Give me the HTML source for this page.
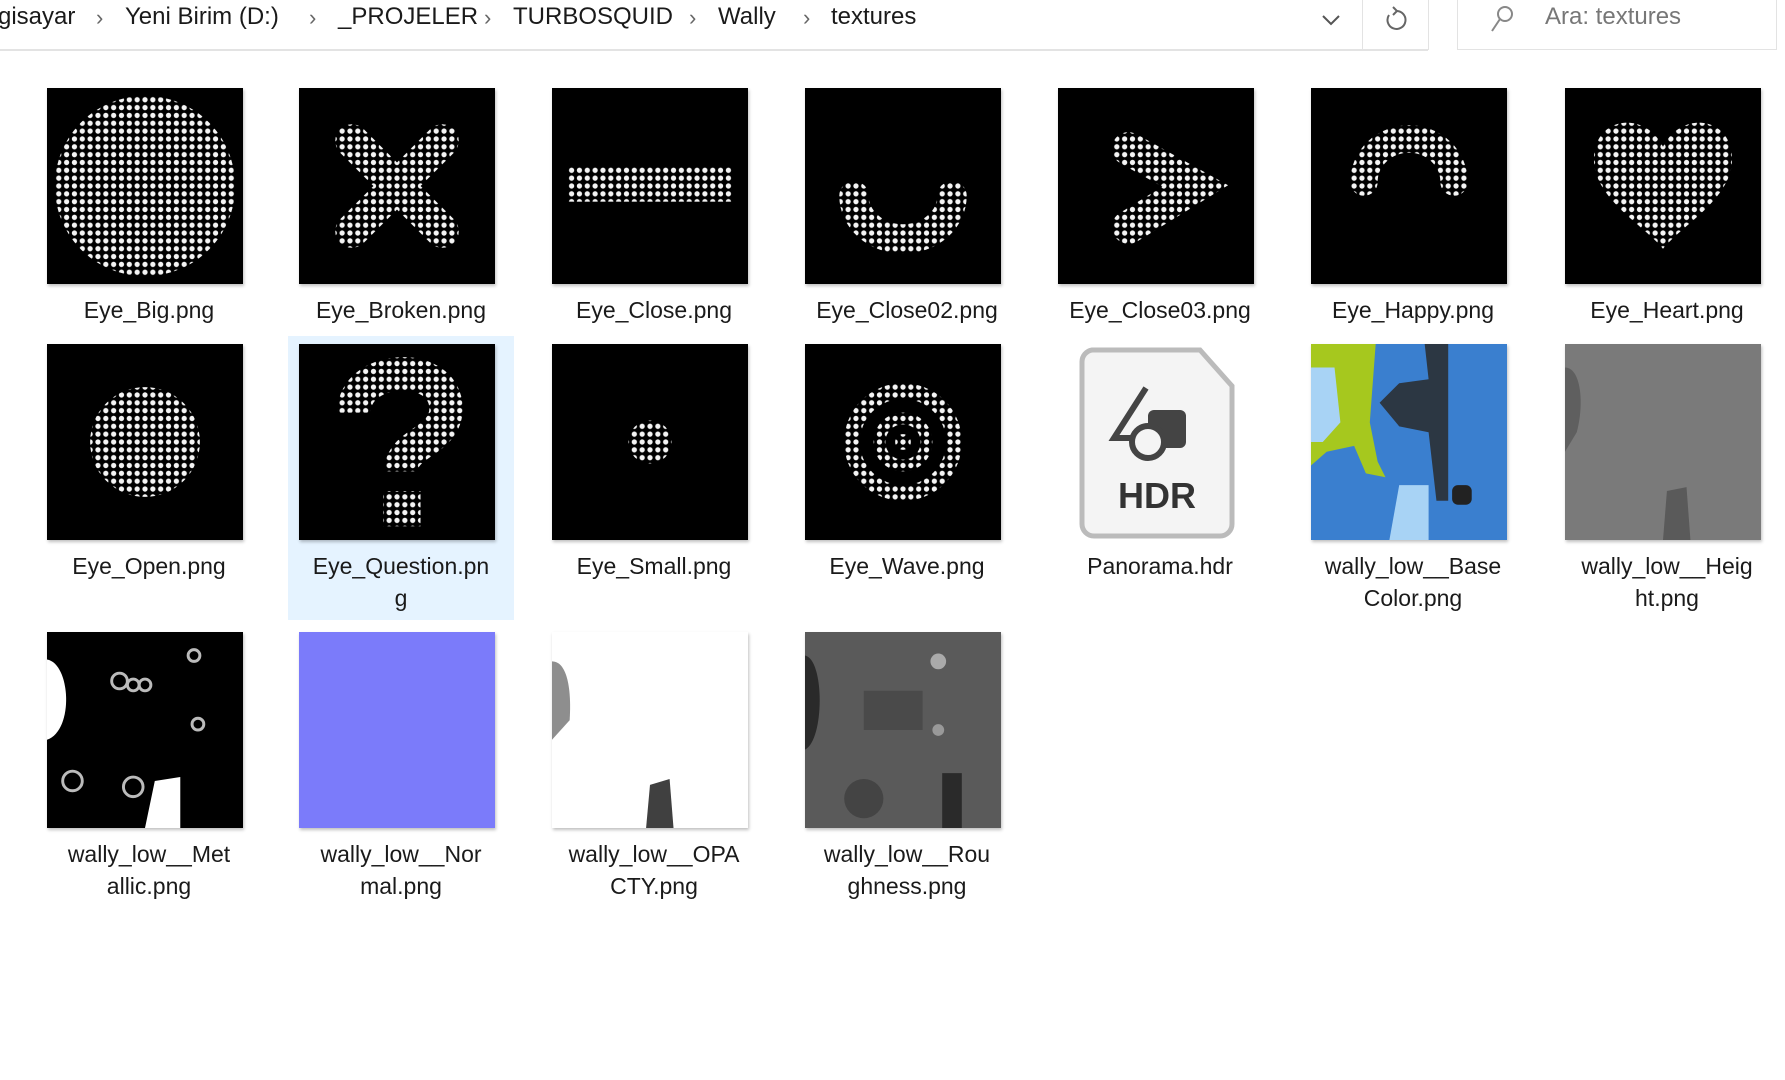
<!DOCTYPE html><html><head><meta charset="utf-8"><style>
body{margin:0;width:1785px;height:1080px;background:#fff;overflow:hidden;font-family:"Liberation Sans",sans-serif;position:relative}
.a{position:absolute}
.bc{top:3px;font-size:24px;color:#1a1a1a;white-space:nowrap}
.ch{top:5px;font-size:22px;color:#666}
.t{position:absolute;width:196px;height:196px;box-shadow:1px 2px 3px rgba(0,0,0,.25)}
.l{position:absolute;width:250px;text-align:center;font-size:23px;line-height:32px;color:#1a1a1a}
svg.t{display:block}
</style></head><body>
<div class="a" style="left:0;top:49px;width:1428px;height:2px;background:#e3e3e3"></div>
<div class="a" style="left:1362px;top:0;width:1px;height:50px;background:#e3e3e3"></div>
<div class="a" style="left:1428px;top:0;width:1px;height:50px;background:#e3e3e3"></div>
<div class="a" style="left:1457px;top:0;width:318px;height:49px;border:1px solid #e3e3e3;border-top:none"></div>
<div class="a bc" style="left:-2px">gisayar</div>
<div class="a ch" style="left:96px">›</div>
<div class="a bc" style="left:125px">Yeni Birim (D:)</div>
<div class="a ch" style="left:309px">›</div>
<div class="a bc" style="left:338px">_PROJELER</div>
<div class="a ch" style="left:484px">›</div>
<div class="a bc" style="left:513px">TURBOSQUID</div>
<div class="a ch" style="left:689px">›</div>
<div class="a bc" style="left:718px">Wally</div>
<div class="a ch" style="left:803px">›</div>
<div class="a bc" style="left:831px">textures</div>
<svg class="a" style="left:1320px;top:12px" width="22" height="16"><path d="M3 4 L11 12 L19 4" stroke="#555" stroke-width="2" fill="none"/></svg>
<svg class="a" style="left:1383px;top:6px" width="26" height="28"><path d="M13 5 A9 9 0 1 1 6 9" stroke="#666" stroke-width="2" fill="none"/><path d="M10 1 L14 5 L10 9" stroke="#666" stroke-width="2" fill="none"/></svg>
<svg class="a" style="left:1488px;top:4px" width="28" height="30"><circle cx="17" cy="10" r="7" stroke="#888" stroke-width="2" fill="none"/><path d="M12 15 L4 27" stroke="#888" stroke-width="2"/></svg>
<div class="a" style="left:1545px;top:3px;font-size:24px;color:#777">Ara: textures</div>

<div class="a" style="left:288px;top:336px;width:226px;height:284px;background:#e5f3ff"></div>

<svg width="0" height="0" style="position:absolute"><defs>
<pattern id="d" width="4" height="4" patternUnits="userSpaceOnUse"><circle cx="2" cy="2" r="1.35" fill="#f4f4f4"/></pattern></defs></svg>

<!-- row 1 -->
<svg class="t" style="left:47px;top:88px" viewBox="0 0 100 100"><rect width="100" height="100"/><circle cx="50" cy="50" r="46" fill="url(#d)"/></svg>
<svg class="t" style="left:299px;top:88px" viewBox="0 0 100 100"><rect width="100" height="100"/><path d="M27 27 L73 73 M73 27 L27 73" stroke="url(#d)" stroke-width="17" stroke-linecap="round"/></svg>
<svg class="t" style="left:552px;top:88px" viewBox="0 0 100 100"><rect width="100" height="100"/><rect x="8" y="40" width="84" height="18" fill="url(#d)"/></svg>
<svg class="t" style="left:805px;top:88px" viewBox="0 0 100 100"><rect width="100" height="100"/><path d="M25 55 A25 22 0 0 0 75 55" stroke="url(#d)" stroke-width="15" fill="none" stroke-linecap="round"/></svg>
<svg class="t" style="left:1058px;top:88px" viewBox="0 0 100 100"><rect width="100" height="100"/><path d="M36 31 L70 50 L36 71" stroke="url(#d)" stroke-width="17" fill="none" stroke-linecap="round"/></svg>
<svg class="t" style="left:1311px;top:88px" viewBox="0 0 100 100"><rect width="100" height="100"/><path d="M27 48 A23 22 0 0 1 73 48" stroke="url(#d)" stroke-width="14" fill="none" stroke-linecap="round"/></svg>
<svg class="t" style="left:1565px;top:88px" viewBox="0 0 100 100"><rect width="100" height="100"/><path d="M50 30 C40 10 12 15 15 40 C18 58 40 70 50 82 C60 70 82 58 85 40 C88 15 60 10 50 30Z" fill="url(#d)"/></svg>
<div class="l" style="left:24px;top:294px">Eye_Big.png</div>
<div class="l" style="left:276px;top:294px">Eye_Broken.png</div>
<div class="l" style="left:529px;top:294px">Eye_Close.png</div>
<div class="l" style="left:782px;top:294px">Eye_Close02.png</div>
<div class="l" style="left:1035px;top:294px">Eye_Close03.png</div>
<div class="l" style="left:1288px;top:294px">Eye_Happy.png</div>
<div class="l" style="left:1542px;top:294px">Eye_Heart.png</div>

<!-- row 2 -->
<svg class="t" style="left:47px;top:344px" viewBox="0 0 100 100"><rect width="100" height="100"/><circle cx="50" cy="50" r="28" fill="url(#d)"/></svg>
<svg class="t" style="left:299px;top:344px" viewBox="0 0 100 100"><rect width="100" height="100"/><path d="M28 35 C28 10 75 8 75 33 C75 50 52 50 52 65" stroke="url(#d)" stroke-width="17" fill="none"/><rect x="43" y="75" width="19" height="18" fill="url(#d)"/></svg>
<svg class="t" style="left:552px;top:344px" viewBox="0 0 100 100"><rect width="100" height="100"/><circle cx="50" cy="50" r="11" fill="url(#d)"/></svg>
<svg class="t" style="left:805px;top:344px" viewBox="0 0 100 100"><rect width="100" height="100"/><circle cx="50" cy="50" r="26" stroke="url(#d)" stroke-width="8" fill="none"/><circle cx="50" cy="50" r="12" stroke="url(#d)" stroke-width="6" fill="none"/><circle cx="50" cy="50" r="4" fill="url(#d)"/></svg>
<svg class="a" style="left:1078px;top:346px" width="158" height="194" viewBox="0 0 158 194"><path d="M14 4 H122 L154 40 V178 A12 12 0 0 1 142 190 H16 A12 12 0 0 1 4 178 V16 A12 12 0 0 1 14 4Z" fill="#f4f4f4" stroke="#bbb" stroke-width="5"/><path d="M68 42 L36 92 H72" stroke="#444" stroke-width="6" fill="none"/><rect x="70" y="64" width="38" height="38" rx="6" fill="#444"/><circle cx="70" cy="96" r="16" fill="#f4f4f4" stroke="#444" stroke-width="6"/><text x="79" y="162" text-anchor="middle" font-family="Liberation Sans" font-weight="bold" font-size="36" fill="#333">HDR</text></svg>
<svg class="t" style="left:1311px;top:344px" viewBox="0 0 100 100"><rect width="100" height="100" fill="#3a7fcf"/><path d="M0 0 H33 L30 40 L34 60 L38 68 L28 66 L22 52 L8 55 L0 62Z" fill="#a6c81e"/><path d="M0 12 H12 L15 40 L6 50 L0 50Z" fill="#a8d3f5"/><path d="M58 0 H70 V80 H64 L60 45 L45 42 L35 30 L45 20 L60 18Z" fill="#2a2a2a" opacity=".85"/><path d="M45 72 H60 V100 H40Z" fill="#a8d3f5"/><rect x="72" y="72" width="10" height="10" rx="3" fill="#222"/></svg>
<svg class="t" style="left:1565px;top:344px" viewBox="0 0 100 100"><rect width="100" height="100" fill="#7a7a7a"/><path d="M0 12 C8 12 10 30 6 45 L0 55Z" fill="#5f5f5f"/><path d="M52 75 L62 73 L64 100 H50Z" fill="#5a5a5a"/></svg>
<div class="l" style="left:24px;top:550px">Eye_Open.png</div>
<div class="l" style="left:276px;top:550px">Eye_Question.pn<br>g</div>
<div class="l" style="left:529px;top:550px">Eye_Small.png</div>
<div class="l" style="left:782px;top:550px">Eye_Wave.png</div>
<div class="l" style="left:1035px;top:550px">Panorama.hdr</div>
<div class="l" style="left:1288px;top:550px">wally_low__Base<br>Color.png</div>
<div class="l" style="left:1542px;top:550px">wally_low__Heig<br>ht.png</div>

<!-- row 3 -->
<svg class="t" style="left:47px;top:632px" viewBox="0 0 100 100"><rect width="100" height="100"/><path d="M0 14 C12 16 14 50 0 55Z" fill="#fff"/><path d="M55 76 L68 74 L68 100 H50Z" fill="#fff"/><g fill="none" stroke="#bbb" stroke-width="1.5"><circle cx="37" cy="25" r="4"/><circle cx="44" cy="27" r="3"/><circle cx="50" cy="27" r="3"/><circle cx="75" cy="12" r="3"/><circle cx="77" cy="47" r="3"/><circle cx="13" cy="76" r="5"/><circle cx="44" cy="79" r="5"/></g></svg>
<svg class="t" style="left:299px;top:632px" viewBox="0 0 100 100"><rect width="100" height="100" fill="#7b7bfa"/></svg>
<svg class="t" style="left:552px;top:632px" viewBox="0 0 100 100"><rect width="100" height="100" fill="#fff"/><path d="M0 15 C8 15 10 30 9 45 L0 55Z" fill="#8e8e8e"/><path d="M50 78 L60 75 L62 100 H48Z" fill="#404040"/></svg>
<svg class="t" style="left:805px;top:632px" viewBox="0 0 100 100"><rect width="100" height="100" fill="#5a5a5a"/><path d="M0 12 C10 14 10 55 0 60Z" fill="#2a2a2a"/><rect x="70" y="72" width="10" height="28" fill="#2a2a2a"/><circle cx="30" cy="85" r="10" fill="#444"/><circle cx="68" cy="15" r="4" fill="#aaa"/><circle cx="68" cy="50" r="3" fill="#999"/><rect x="30" y="30" width="30" height="20" fill="#4a4a4a"/></svg>
<div class="l" style="left:24px;top:838px">wally_low__Met<br>allic.png</div>
<div class="l" style="left:276px;top:838px">wally_low__Nor<br>mal.png</div>
<div class="l" style="left:529px;top:838px">wally_low__OPA<br>CTY.png</div>
<div class="l" style="left:782px;top:838px">wally_low__Rou<br>ghness.png</div>
</body></html>
